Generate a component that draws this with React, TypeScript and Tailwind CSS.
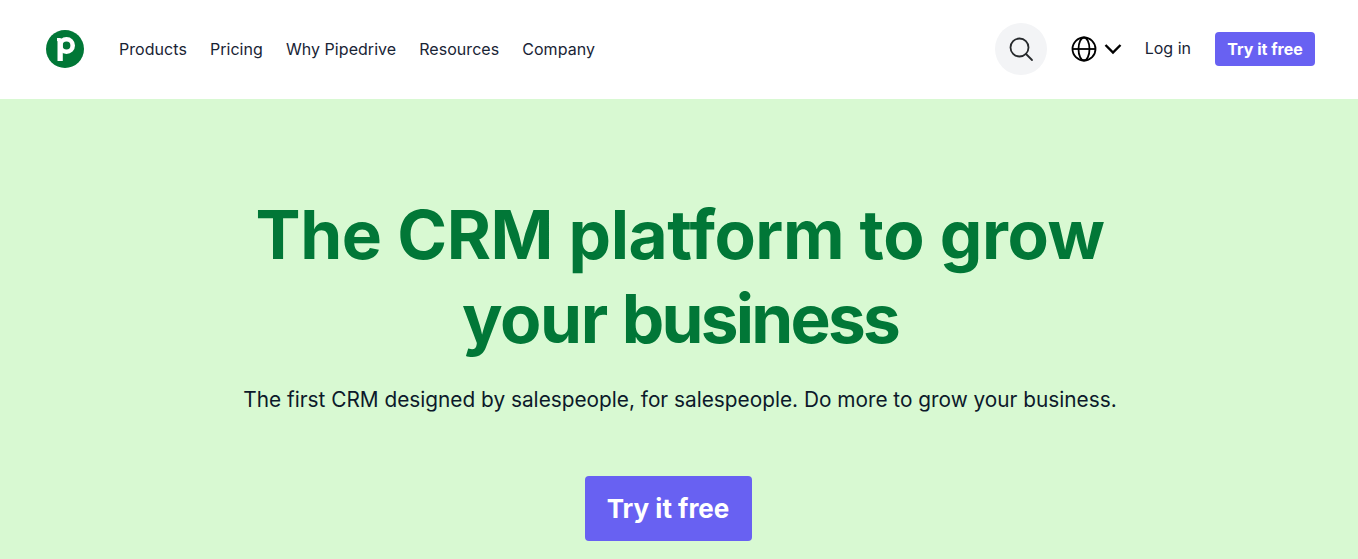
export default function App() {
  const navItems = ['Products', 'Pricing', 'Why Pipedrive', 'Resources', 'Company'];

  return (
    <div className="h-[559px] overflow-hidden bg-[#d8f9d2] font-['Inter',sans-serif]">
      {/* Header */}
      <header className="flex h-[99px] items-center bg-white pb-px pl-[46px] pr-[43px]">
        <svg width="38" height="38" viewBox="0 0 38 38" className="mr-[35px] shrink-0">
          <circle cx="19" cy="19" r="19" fill="#017737" />
          <circle cx="20.500" cy="15.500" r="6.200" fill="none" stroke="#fff" strokeWidth="4.600" />
          <path d="M11 8h2.500c2 0 3.300 1.200 3.300 3v20h-5.300V11.500c0-.5-.3-.8-.8-.8H11z" fill="#fff" />
        </svg>
        <nav className="flex items-center gap-[23px] text-[16px] tracking-[0.05px] text-[#192435]">
          {navItems.map((item) => (
            <a key={item}>{item}</a>
          ))}
        </nav>
        <div className="ml-auto flex items-center">
          <div className="mr-6 flex h-[52px] w-[52px] items-center justify-center rounded-full bg-[#f3f4f6]">
            <svg width="26" height="26" viewBox="0 0 26 26" fill="none" stroke="#26292c" strokeWidth="1.800">
              <circle cx="11.500" cy="11.500" r="9" />
              <path d="M18 18l6 6" strokeLinecap="round" />
            </svg>
          </div>
          <svg width="26" height="26" viewBox="0 0 26 26" fill="none" stroke="#000" strokeWidth="1.800">
            <circle cx="13" cy="13" r="11.500" />
            <ellipse cx="13" cy="13" rx="5.500" ry="11.500" />
            <path d="M1.500 13h23" />
          </svg>
          <svg width="20" height="12" viewBox="0 0 20 12" fill="none" stroke="#000" strokeWidth="2.400" className="ml-[6px] mr-[22px]">
            <path d="M2.500 2l7.500 7.500L17.500 2" />
          </svg>
          <a className="mr-6 -translate-y-px text-[16px] text-[#192435]">Log in</a>
          <button className="h-[34px] w-[100px] rounded-[4px] bg-[#6861f2] text-[16px] font-bold text-white">
            Try it free
          </button>
        </div>
      </header>

      {/* Hero */}
      <main className="flex flex-col items-center pl-[2px] pt-[94px]">
        <h1 className="w-[900px] text-center text-[67.500px] leading-[84px] font-bold text-[#017737]">
          <span className="block tracking-[-0.430px]">The CRM platform to grow</span>
          <span className="flex justify-center gap-[15px]">
            <span className="tracking-[-1.400px]">your</span>
            <span className="tracking-[-2.800px]">business</span>
          </span>
        </h1>
        <p className="mt-[24px] text-[20.800px] leading-[30px] text-[#0c1a2a]">
          The first CRM designed by salespeople, for salespeople. Do more to grow your business.
        </p>
        <button className="mr-[24px] mt-[61px] h-[65px] w-[167px] rounded-[4px] bg-[#6861f2] text-[26px] font-bold text-white">
          Try it free
        </button>
      </main>
    </div>
  );
}
